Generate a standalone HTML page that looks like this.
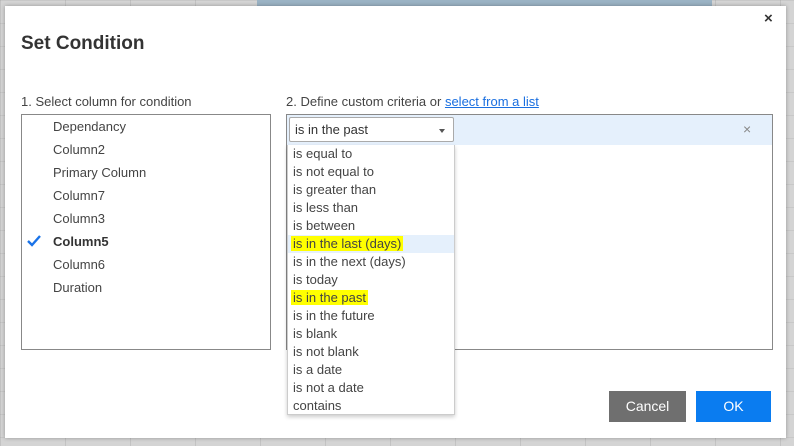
<!DOCTYPE html>
<html><head><style>
*{box-sizing:border-box;margin:0;padding:0}
body{width:794px;height:446px;overflow:hidden;position:relative;background:#d4d4d4;font-family:"Liberation Sans",sans-serif;color:#444;
background-image:linear-gradient(90deg,rgba(0,0,0,.08) 1px,transparent 1px),linear-gradient(rgba(0,0,0,.06) 1px,transparent 1px);background-size:65px 100%,100% 23px}
.top{position:absolute;left:257px;top:0;width:455px;height:6px;background:#9bb3c4}
.dlg{position:absolute;left:5px;top:6px;width:781px;height:432px;background:#fff;box-shadow:0 0 4px rgba(0,0,0,.3)}
.a{position:absolute}
h1{position:absolute;left:21px;top:33px;font-size:19px;font-weight:bold;color:#333}
.lbl{font-size:13px;color:#444}
.box{border:1px solid #888;background:#fff}
.li{position:absolute;left:53px;font-size:13px;color:#444}
.dd{position:absolute;left:287px;top:145px;width:168px;height:270px;background:#fff;border:1px solid #ccc;border-top:none;box-shadow:0 2px 4px rgba(0,0,0,.2)}
.dd div{height:18px;line-height:18px;padding-left:5px;font-size:13px;color:#444}
.hl span{background:#ff0;padding:0 2px;margin-left:-2px}
.btn{position:absolute;top:391px;height:31px;color:#fff;font-size:14px;text-align:center;line-height:31px}
</style></head><body>
<div class="top"></div>
<div class="dlg"></div>
<div class="a" style="left:764px;top:10px;font-size:15px;font-weight:bold;color:#333">×</div>
<h1>Set Condition</h1>
<div class="a lbl" style="left:21px;top:94px">1. Select column for condition</div>
<div class="a lbl" style="left:286px;top:94px">2. Define custom criteria or <span style="color:#1a6fe0;text-decoration:underline">select from a list</span></div>
<div class="a box" style="left:21px;top:114px;width:250px;height:236px"></div>
<div class="li" style="top:119px">Dependancy</div>
<div class="li" style="top:142px">Column2</div>
<div class="li" style="top:165px">Primary Column</div>
<div class="li" style="top:188px">Column7</div>
<div class="li" style="top:211px">Column3</div>
<div class="li" style="top:234px;font-weight:bold;color:#333">Column5</div>
<div class="li" style="top:257px">Column6</div>
<div class="li" style="top:280px">Duration</div>
<svg class="a" style="left:26px;top:234px" width="16" height="14"><path d="M2 7 L6 11 L14 2" fill="none" stroke="#1a73e8" stroke-width="2.4"/></svg>
<div class="a box" style="left:286px;top:114px;width:487px;height:236px"></div>
<div class="a" style="left:287px;top:115px;width:485px;height:30px;background:#e5f0fc"></div>
<div class="a" style="left:289px;top:117px;width:165px;height:25px;background:#fff;border:1px solid #aaa;border-radius:2px;font-size:13px;line-height:23px;padding-left:5px;color:#333">is in the past</div>
<div class="a" style="left:439px;top:129px;width:0;height:0;border-left:3.5px solid transparent;border-right:3.5px solid transparent;border-top:4px solid #555"></div>
<div class="a" style="left:743px;top:121px;font-size:14px;color:#888">×</div>
<div class="dd">
<div>is equal to</div><div>is not equal to</div><div>is greater than</div><div>is less than</div><div>is between</div>
<div class="hl" style="background:#e5f0fc"><span>is in the last (days)</span></div>
<div>is in the next (days)</div><div>is today</div>
<div class="hl"><span>is in the past</span></div>
<div>is in the future</div><div>is blank</div><div>is not blank</div><div>is a date</div><div>is not a date</div><div>contains</div>
</div>
<div class="btn" style="left:609px;width:77px;background:#6f6f6f">Cancel</div>
<div class="btn" style="left:696px;width:75px;background:#0a7cf0">OK</div>
</body></html>
